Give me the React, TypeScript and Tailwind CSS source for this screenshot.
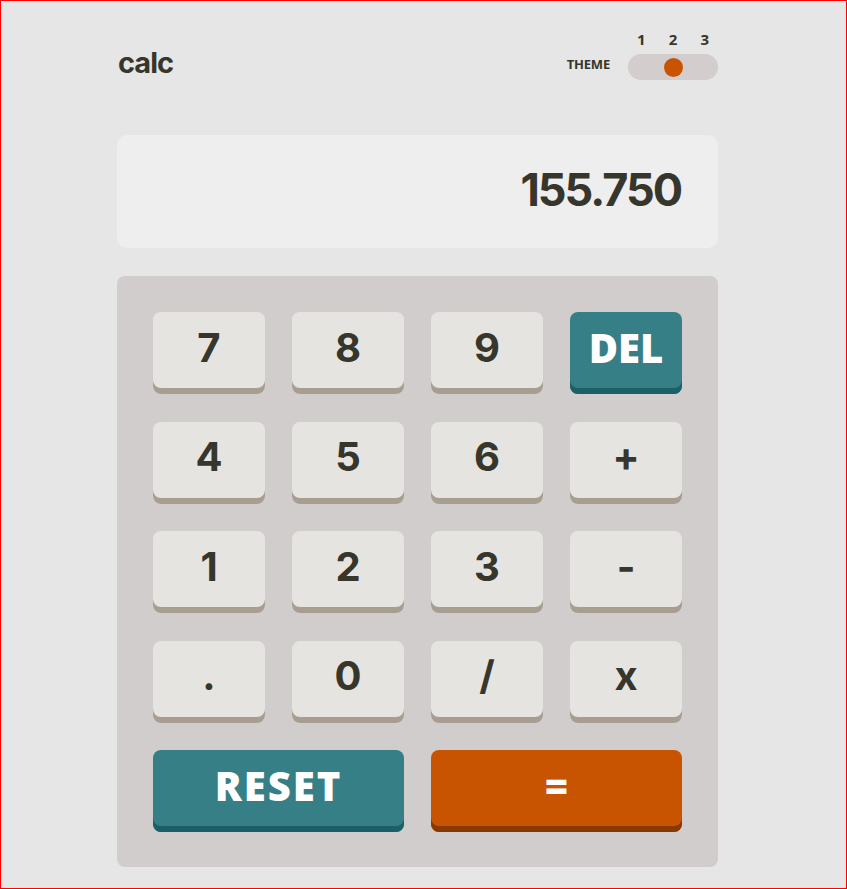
import type { ReactNode } from 'react';

type KeyTone = 'plain' | 'teal' | 'orange';

type KeyProps = {
  label: string;
  tone?: KeyTone;
  wide?: boolean;
  word?: boolean;
  spread?: boolean;
};

const toneClasses: Record<KeyTone, string> = {
  plain: 'bg-[#e5e4e1] text-[#36362c] shadow-[inset_0_-6px_0_#a79e91]',
  teal: 'bg-[#377f86] text-white shadow-[inset_0_-6px_0_#1b6066]',
  orange: 'bg-[#c85402] text-white shadow-[inset_0_-6px_0_#873901]',
};

const spartan = "font-['Inter','Liberation_Sans',sans-serif]";
const open = "font-['Open_Sans','Liberation_Sans',sans-serif]";

const Key = ({ label, tone = 'plain', wide = false, word = false, spread = false }: KeyProps) => (
  <button
    type="button"
    className={`flex h-[82px] items-center justify-center rounded-[8px] pb-[11px] text-[40px] leading-none ${
      wide ? 'col-span-2' : ''
    } ${spread ? 'tracking-[2px]' : ''} ${word ? `${open} font-extrabold` : `${spartan} font-bold`} ${toneClasses[tone]}`}
  >
    {label}
  </button>
);

const Row = ({ children }: { children: ReactNode }) => <>{children}</>;

export default function App() {
  return (
    <div className="h-[889px] w-full border border-[#ff0000] bg-[#e6e6e6]">
      <div className="ml-[116px] w-[601px] pt-[29px]">
        <header className="flex items-end justify-between">
          <h1 className={`${spartan} mb-[3px] pl-[1px] text-[29px] font-bold leading-none tracking-[-1px] text-[#36362c]`}>
            calc
          </h1>
          <div className="flex items-end gap-[18px]">
            <span className={`${open} mb-[6px] text-[13px] font-bold tracking-[-0.2px] text-[#36362c]`}>
              THEME
            </span>
            <div className="w-[90px]">
              <div className={`${open} flex justify-between px-[9px] text-[15px] font-bold leading-[18px] text-[#36362c]`}>
                <span>1</span>
                <span>2</span>
                <span>3</span>
              </div>
              <div className="mt-[6px] flex h-[26px] items-center justify-center rounded-full bg-[#d3cdcd]">
                <span className="h-[19px] w-[19px] rounded-full bg-[#c85402]" />
              </div>
            </div>
          </div>
        </header>

        <div className="mt-[55px] flex h-[113px] items-center justify-end rounded-[10px] bg-[#eeeeee] pb-[4px] pr-[37px]">
          <span className={`${spartan} text-[45px] font-bold leading-none tracking-[-2px] text-[#36362c]`}>
            155.750
          </span>
        </div>

        <div className="mt-[28px] grid grid-cols-4 gap-x-[27px] gap-y-[27.5px] rounded-[8px] bg-[#d2cdcd] pb-[35px] pl-[36px] pr-[36px] pt-[36px]">
          <Row>
            <Key label="7" />
            <Key label="8" />
            <Key label="9" />
            <Key label="DEL" tone="teal" word />
          </Row>
          <Row>
            <Key label="4" />
            <Key label="5" />
            <Key label="6" />
            <Key label="+" />
          </Row>
          <Row>
            <Key label="1" />
            <Key label="2" />
            <Key label="3" />
            <Key label="-" />
          </Row>
          <Row>
            <Key label="." />
            <Key label="0" />
            <Key label="/" />
            <Key label="x" />
          </Row>
          <Row>
            <Key label="RESET" tone="teal" wide word spread />
            <Key label="=" tone="orange" wide word />
          </Row>
        </div>
      </div>
    </div>
  );
}
